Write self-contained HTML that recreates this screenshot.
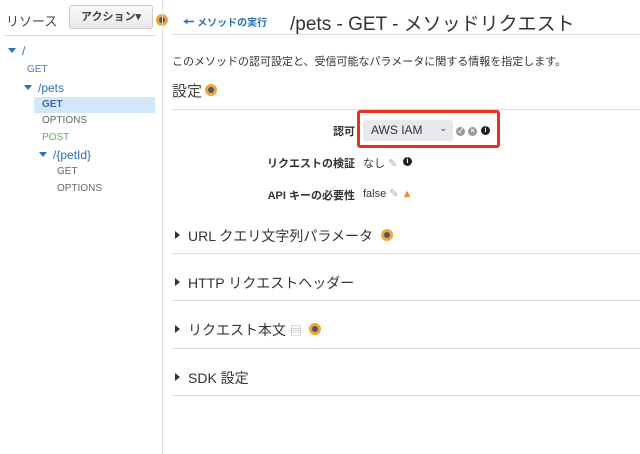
<!DOCTYPE html>
<html><head><meta charset="utf-8"><style>
body{margin:0;width:640px;height:454px;background:#fff;font-family:"Liberation Sans","Noto Sans CJK JP",sans-serif;color:#333;position:relative;overflow:hidden}
.a{position:absolute;white-space:nowrap}
.dot{position:absolute;width:6px;height:6px;border-radius:50%;background:#4a5a66;border:3px solid #f0a53a;box-sizing:content-box}
.hl{position:absolute;height:1px;background:#ddd}
.tri{display:inline-block;width:0;height:0;border-left:4px solid transparent;border-right:4px solid transparent;border-top:5px solid #2a6fb5;margin-right:6px;vertical-align:2px}
.rt{display:inline-block;width:0;height:0;border-top:4px solid transparent;border-bottom:4px solid transparent;border-left:5px solid #333;margin-right:8px;vertical-align:2px}
.m{font-size:10px;color:#666}
.sec{font-size:14px;color:#333;left:175px}
.lab{font-size:11px;font-weight:bold;text-align:right}
.ic{position:absolute;width:9px;height:9px;border-radius:50%;color:#fff;font-size:7px;text-align:center;line-height:9px;font-weight:bold}
</style></head><body>
<div class="a" style="left:6px;top:11px;font-size:13px;color:#444">リソース</div>
<div class="a" style="left:69px;top:5px;width:84px;height:24px;border:1px solid #ccc;border-radius:3px;background:linear-gradient(#fafafa,#e8e8e8);box-sizing:border-box;font-size:11px;font-weight:bold;text-align:center;line-height:22px;color:#444">アクション▾</div>
<div class="dot" style="left:156px;top:14px"></div>
<div class="hl" style="left:5px;top:35px;width:150px"></div>
<div style="position:absolute;left:162px;top:0;width:1px;height:454px;background:#ddd"></div>
<div class="a" style="left:8px;top:44px;font-size:12px;color:#2a6fb5"><span class="tri"></span>/</div>
<div class="a m" style="left:27px;top:64px;color:#4a7fb5">GET</div>
<div class="a" style="left:24px;top:81px;font-size:12px;color:#2a6fb5"><span class="tri"></span>/pets</div>
<div class="a" style="left:34px;top:97px;width:121px;height:16px;background:#d4e6f9"></div>
<div class="a m" style="left:42px;top:99px;color:#3a6ea8;font-weight:bold">GET</div>
<div class="a m" style="left:42px;top:115px">OPTIONS</div>
<div class="a m" style="left:42px;top:132px;color:#5cb85c">POST</div>
<div class="a" style="left:39px;top:148px;font-size:12px;color:#2a6fb5"><span class="tri"></span>/{petId}</div>
<div class="a m" style="left:57px;top:166px">GET</div>
<div class="a m" style="left:57px;top:183px">OPTIONS</div>

<div class="a" style="left:183px;top:14px;font-size:10px;font-weight:bold;color:#2a6fb5"><span style="font-size:13px;line-height:10px">🠔</span> メソッドの実行</div>
<div class="a" style="left:290px;top:9px;font-size:19px;color:#333">/pets - GET - メソッドリクエスト</div>
<div class="hl" style="left:172px;top:34px;width:468px"></div>
<div class="a" style="left:172px;top:53px;font-size:11px">このメソッドの認可設定と、受信可能なパラメータに関する情報を指定します。</div>
<div class="a" style="left:172px;top:80px;font-size:15px;color:#444">設定</div>
<div class="dot" style="left:205px;top:84px"></div>
<div class="hl" style="left:172px;top:109px;width:468px"></div>
<div class="a lab" style="left:300px;top:123px;width:55px">認可</div>
<div class="a" style="left:357px;top:110px;width:143px;height:38px;border:3px solid #e8321f;border-radius:3px;box-sizing:border-box"></div>
<div class="a" style="left:363px;top:120px;width:90px;height:21px;background:#e9e9ed;border-radius:3px;font-size:12px;line-height:21px;padding-left:8px;box-sizing:border-box">AWS IAM<span style="position:absolute;right:6px;font-size:9px;top:-2px">⌄</span></div>
<div class="ic" style="left:456px;top:127px;background:#999">✓</div>
<div class="ic" style="left:468px;top:127px;background:#999">×</div>
<div class="ic" style="left:481px;top:126px;background:#222">i</div>
<div class="a lab" style="left:220px;top:155px;width:135px">リクエストの検証</div>
<div class="a" style="left:363px;top:155px;font-size:11px">なし <span style="color:#aaa">✎</span></div>
<div class="ic" style="left:403px;top:157px;background:#222">i</div>
<div class="a lab" style="left:220px;top:187px;width:135px">API キーの必要性</div>
<div class="a" style="left:363px;top:187px;font-size:11px">false <span style="color:#aaa">✎</span> <span style="color:#e8902a">▲</span></div>
<div class="a sec" style="top:226px"><span class="rt"></span>URL クエリ文字列パラメータ</div>
<div class="dot" style="left:381px;top:229px"></div>
<div class="hl" style="left:172px;top:253px;width:468px"></div>
<div class="a sec" style="top:273px"><span class="rt"></span>HTTP リクエストヘッダー</div>
<div class="hl" style="left:172px;top:300px;width:468px"></div>
<div class="a sec" style="top:320px"><span class="rt"></span>リクエスト本文 <span style="color:#aaa;font-size:12px">▤</span></div>
<div class="dot" style="left:309px;top:323px"></div>
<div class="hl" style="left:172px;top:348px;width:468px"></div>
<div class="a sec" style="top:368px"><span class="rt"></span>SDK 設定</div>
<div class="hl" style="left:172px;top:395px;width:468px"></div>
</body></html>
